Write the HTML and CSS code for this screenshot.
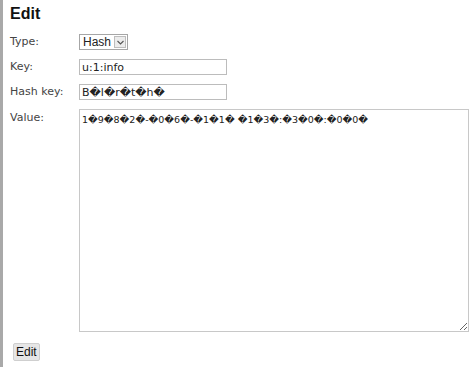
FILE: index.html
```html
<!DOCTYPE html>
<html>
<head>
  <title>Edit</title>
  <meta charset="UTF-8">
  <link rel="stylesheet" href="styles.css">
</head>
<body>
  <div class="page">
    <h2>Edit</h2>

    <form class="edit-form">
      <div class="row">
        <label>Type:</label>
        <div class="fake-select">
          <span class="fake-select-value">Hash</span>
          <span class="fake-select-arrow">
            <svg width="7" height="5" viewBox="0 0 7 5"><path d="M0.5 1 L3.5 4 L6.5 1" fill="none" stroke="#555" stroke-width="1.1"/></svg>
          </span>
        </div>
      </div>

      <div class="row">
        <label for="key">Key:</label>
        <input type="text" id="key" class="field" value="u:1:info">
      </div>

      <div class="row">
        <label for="hashKey">Hash key:</label>
        <input type="text" id="hashKey" class="field" value="B&#xFFFD;l&#xFFFD;r&#xFFFD;t&#xFFFD;h&#xFFFD;">
      </div>

      <div class="row row-value">
        <label for="value">Value:</label>
        <textarea id="value" class="value-box">1&#xFFFD;9&#xFFFD;8&#xFFFD;2&#xFFFD;-&#xFFFD;0&#xFFFD;6&#xFFFD;-&#xFFFD;1&#xFFFD;1&#xFFFD; &#xFFFD;1&#xFFFD;3&#xFFFD;:&#xFFFD;3&#xFFFD;0&#xFFFD;:&#xFFFD;0&#xFFFD;0&#xFFFD;</textarea>
      </div>

      <div class="actions">
        <button type="button" class="btn">Edit</button>
      </div>
    </form>
  </div>
</body>
</html>
```

FILE: styles.css
```css
/* edit page */
html, body { height: 100%; }
body {
  margin: 0;
  background: #fff;
  color: #333;
  font-family: "DejaVu Sans", Verdana, sans-serif;
  font-size: 11px;
}
.page {
  box-sizing: border-box;
  min-height: 100%;
  border-left: 3px solid #a9a9a9;
  padding: 4px 0 0 7px;
}
h2 {
  margin: 0 0 10px 0;
  font-family: "Liberation Sans", Arial, sans-serif;
  font-size: 16px;
  font-weight: bold;
  line-height: 20px;
  color: #111;
}
.row { display: flex; align-items: center; margin-bottom: 9px; }
.row label { width: 69px; flex: none; color: #444; line-height: 16px; }
.row-value { align-items: flex-start; }
.row-value label { padding-top: 1px; }

.fake-select {
  display: flex;
  height: 16px;
  box-sizing: border-box;
  border: 1px solid #a6a6a6;
  background: #fff;
}
.fake-select-value {
  font-family: "Liberation Sans", Arial, sans-serif;
  font-size: 12px;
  line-height: 14px;
  color: #222;
  padding: 0 3px 0 3px;
}
.fake-select-arrow {
  display: flex;
  align-items: center;
  justify-content: center;
  width: 12px;
  margin: 1px 1px 1px 0;
  border: 1px solid #bdbdbd;
  background: #ececec;
  box-sizing: border-box;
}

.field {
  width: 148px;
  height: 16px;
  box-sizing: border-box;
  margin: 0;
  padding: 0 2px;
  border: 1px solid #bcbcbc;
  font-family: "DejaVu Sans", Verdana, sans-serif;
  font-size: 11px;
  color: #222;
  outline: none;
}
.value-box {
  width: 390px;
  height: 223px;
  box-sizing: border-box;
  margin: 0;
  padding: 4px 2px;
  border: 1px solid #c8c8c8;
  font-family: "DejaVu Sans", sans-serif;
  font-size: 9.5px;
  line-height: 12px;
  color: #222;
  outline: none;
}
.actions { padding: 2px 0 0 3px; }
.btn {
  height: 18px;
  padding: 0 2px;
  border: 1px solid #cfcfcf;
  border-radius: 2px;
  background: #e6e6e6;
  font-family: "Liberation Sans", Arial, sans-serif;
  font-size: 12px;
  color: #111;
  line-height: 16px;
}
```
